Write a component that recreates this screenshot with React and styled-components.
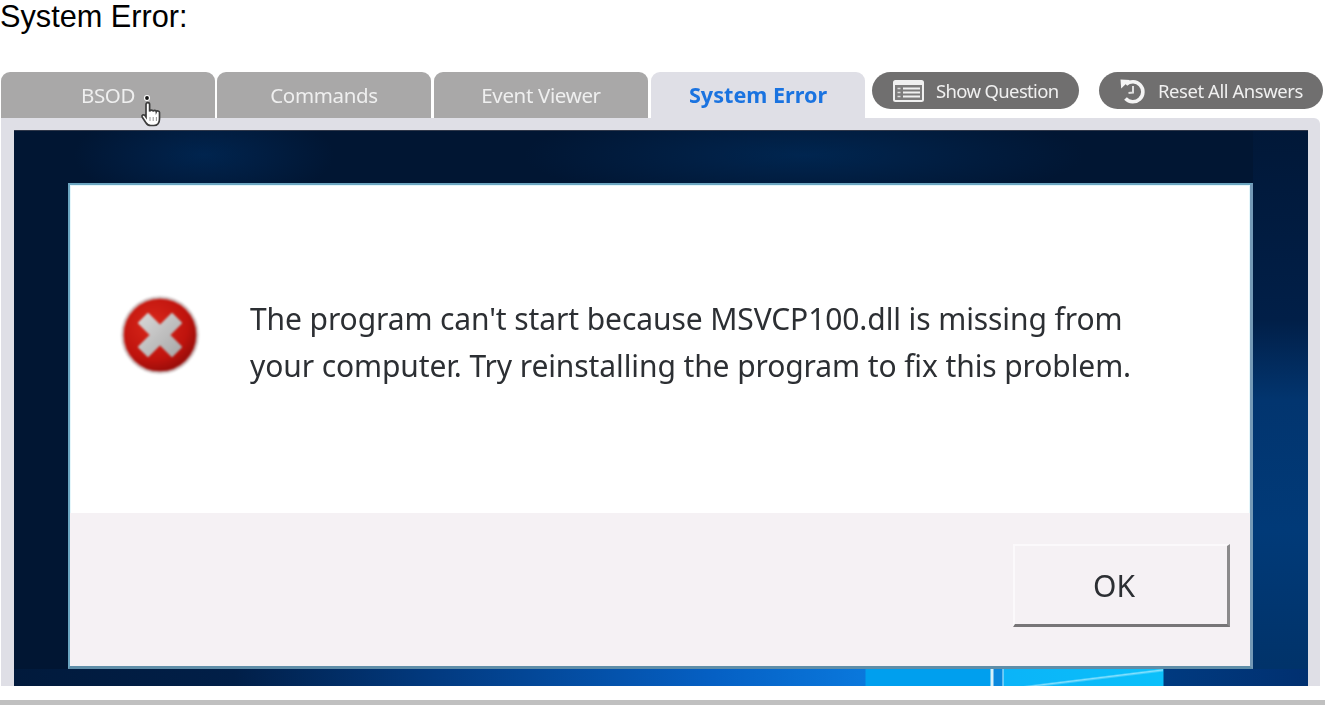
import styled, { createGlobalStyle } from "styled-components";

const GlobalStyle = createGlobalStyle`
  html, body {
    margin: 0;
    padding: 0;
    background: #fff;
  }
  body {
    font-family: "Liberation Sans", Arial, sans-serif;
  }
`;

const Page = styled.div`
  width: 1325px;
  height: 705px;
  overflow: hidden;
  display: flex;
  flex-direction: column;
`;

const Heading = styled.div`
  height: 72px;
  box-sizing: border-box;
  font-size: 30.7px;
  line-height: 34px;
  color: #000;
`;

const TabBar = styled.div`
  display: flex;
  height: 46px;
  padding-left: 1px;
  align-items: flex-start;
  filter: blur(0.5px);
`;

const Tab = styled.div`
  width: 214px;
  height: 46px;
  margin-right: ${(p) => p.$gap}px;
  box-sizing: border-box;
  border-radius: 9px 9px 0 0;
  background: ${(p) => (p.$active ? "#dfdfe6" : "#a9a8a8")};
  color: ${(p) => (p.$active ? "#1a73e0" : "#efefef")};
  font-family: "Noto Sans", sans-serif;
  font-weight: ${(p) => (p.$active ? 700 : 400)};
  font-size: ${(p) => (p.$active ? 21.6 : 20.5)}px;
  letter-spacing: ${(p) => (p.$active ? 0 : -0.35)}px;
  line-height: 46px;
  text-align: center;
`;

const Pill = styled.div`
  height: 37px;
  width: ${(p) => p.$width}px;
  margin-left: ${(p) => p.$left}px;
  box-sizing: border-box;
  display: flex;
  align-items: center;
  gap: ${(p) => p.$iconGap}px;
  padding-left: ${(p) => p.$pad}px;
  border-radius: 19px;
  background: #706f6f;
  color: #f0f0f0;
  font-family: "Noto Sans", sans-serif;
  font-size: 18.5px;
  letter-spacing: ${(p) => p.$track}px;
  white-space: nowrap;
`;

const Panel = styled.div`
  width: 1319px;
  height: 568px;
  margin-left: 1px;
  box-sizing: border-box;
  padding: 12px 12px 0 13px;
  background: #dfdfe6;
  border-radius: 0 6px 0 0;
  filter: blur(0.5px);
`;

const Desktop = styled.div`
  height: 556px;
  box-sizing: border-box;
  padding: 53px 55px 17px 54px;
  background:
    linear-gradient(173deg, transparent 0 52%, rgba(190, 240, 255, 0.7) 56%, transparent 62%) 989px 100% / 160px 17px no-repeat,
    linear-gradient(
        90deg,
        #011a3c 0,
        #011f48 220px,
        #023a80 420px,
        #0560c4 700px,
        #0a78dc 851px,
        #009fee 852px,
        #009fee 976px,
        #d8f0fa 977px,
        #d8f0fa 979px,
        #0a88dd 980px,
        #0a88dd 988px,
        #c0ecff 989px,
        #0bb4f8 990px,
        #0bc0fa 1149px,
        #003a80 1150px,
        #013070 1294px
      )
      0 100% / 100% 17px no-repeat,
    linear-gradient(180deg, #011838 0, #011f48 190px, #02356f 270px, #013a78 400px, #013268 100%) 100% 0 / 55px 100% no-repeat,
    radial-gradient(ellipse 130px 50px at 190px 25px, rgba(0, 42, 90, 0.7), transparent),
    radial-gradient(ellipse 280px 50px at 790px 25px, rgba(0, 44, 92, 0.7), transparent),
    #011633;
  box-shadow: inset 0 1px 0 #30384a;
`;

const Dialog = styled.div`
  height: 486px;
  box-sizing: border-box;
  display: flex;
  flex-direction: column;
  border: 2px solid #6ba5c0;
  border-right: 3px solid #7499b6;
  border-bottom: 3px solid #5f8ea8;
  box-shadow: inset 0 0 0 1px #e4f6fb;
  background: #fff;
`;

const MessageArea = styled.div`
  height: 328px;
  display: flex;
  align-items: flex-start;
  padding: 110px 0 0 50px;
  box-sizing: border-box;
`;

const ErrorBadge = styled.svg`
  width: 80px;
  height: 80px;
  flex: none;
  filter: blur(1px);
`;

const Message = styled.div`
  margin-left: 50px;
  font-family: "Noto Sans", sans-serif;
  font-size: 30px;
  letter-spacing: -0.1px;
  line-height: 47px;
  color: #2c2f33;
  white-space: nowrap;
`;

const Footer = styled.div`
  flex: 1;
  display: flex;
  justify-content: flex-end;
  padding: 31px 20px 0 0;
  background: #f5f1f4;
`;

const OkButton = styled.div`
  width: 217px;
  height: 83px;
  box-sizing: border-box;
  display: flex;
  align-items: center;
  justify-content: center;
  padding-right: 14px;
  background: #f5f1f4;
  border-top: 2px solid #fbf9fb;
  border-left: 2px solid #fbf9fb;
  border-right: 3px solid #8b8a8b;
  border-bottom: 3px solid #777577;
  font-family: "Noto Sans", sans-serif;
  font-size: 30px;
  color: #2c2f33;
`;

const BottomRule = styled.div`
  height: 5px;
  margin-top: 14px;
  background: #c0c0c0;
`;

const CursorWrap = styled.svg`
  position: absolute;
  left: 140px;
  top: 94px;
  width: 24px;
  height: 33px;
  filter: blur(0.4px);
`;

function ListIcon() {
  return (
    <svg width="31" height="22" viewBox="0 0 31 22" fill="none">
      <rect x="1" y="1" width="29" height="20" rx="1.5" fill="#7d7c7c" stroke="#f0f0f0" strokeWidth="2" />
      <path d="M1 3.5h29" stroke="#f0f0f0" strokeWidth="3" />
      <path d="M4.5 8.5h3M4.5 12.5h3M4.5 16.5h3" stroke="#dcdcdc" strokeWidth="1.6" />
      <path d="M10 8.5h17M10 12.5h17M10 16.5h17" stroke="#f0f0f0" strokeWidth="1.8" />
    </svg>
  );
}

function ResetIcon() {
  return (
    <svg width="26" height="26" viewBox="0 0 26 26" fill="none">
      <path d="M7 6.5A10 10 0 1 1 6.5 20.5" stroke="#f4f4f4" strokeWidth="3.6" />
      <path d="M1.5 1.5l9.5.4-8.8 8.6z" fill="#f4f4f4" />
      <path d="M14 8v6.5l-4.5 .5" stroke="#dedede" strokeWidth="2" />
    </svg>
  );
}

function ErrorIcon() {
  return (
    <ErrorBadge viewBox="0 0 80 80">
      <defs>
        <radialGradient id="redFill" cx="0.4" cy="0.36" r="0.72">
          <stop offset="0" stopColor="#d9281b" />
          <stop offset="0.65" stopColor="#bf130d" />
          <stop offset="1" stopColor="#880a08" />
        </radialGradient>
        <linearGradient id="crossFill" x1="0" y1="0" x2="1" y2="1">
          <stop offset="0" stopColor="#d8d8d8" />
          <stop offset="1" stopColor="#a8a8a8" />
        </linearGradient>
      </defs>
      <circle cx="40" cy="40" r="37.5" fill="url(#redFill)" stroke="#cdbcbc" strokeWidth="2.5" />
      <path
        d="M28 19L40 31 52 19 61 28 49 40 61 52 52 61 40 49 28 61 19 52 31 40 19 28z"
        fill="url(#crossFill)"
        stroke="url(#crossFill)"
        strokeWidth="2"
        strokeLinejoin="round"
      />
    </ErrorBadge>
  );
}

function HandCursor() {
  return (
    <CursorWrap viewBox="0 0 24 33">
      <circle cx="7" cy="4" r="3" fill="#fff" />
      <circle cx="7" cy="4" r="1.9" fill="#111" />
      <path
        d="M6 10.5c0-2.6 3.6-2.6 3.6 0v7c.4-1.8 3.3-1.8 3.5 0 .3-1.6 3-1.6 3.2.2.5-1.2 3.2-1 3.2.8v6.5c0 3.6-2 6.5-5.6 6.5h-3.2c-2.2 0-3.6-1-4.8-2.8l-3.6-5.4c-1.2-2 1.2-3.4 2.7-1.8L6 23z"
        fill="#fff"
        stroke="#3c3c3c"
        strokeWidth="1.7"
      />
      <path d="M10 23v4M13.2 23v4M16.4 23v4" stroke="#8a8a8a" strokeWidth="0.9" />
    </CursorWrap>
  );
}

export default function App() {
  return (
    <>
      <GlobalStyle />
      <Page>
        <Heading>System Error:</Heading>
        <TabBar>
          <Tab $gap={2}>BSOD</Tab>
          <Tab $gap={3}>Commands</Tab>
          <Tab $gap={3}>Event Viewer</Tab>
          <Tab $active $gap={0}>System Error</Tab>
          <Pill $width={207} $left={7} $pad={21} $iconGap={12} $track={-0.65}>
            <ListIcon />
            Show Question
          </Pill>
          <Pill $width={224} $left={20} $pad={20} $iconGap={13} $track={-0.45}>
            <ResetIcon />
            Reset All Answers
          </Pill>
        </TabBar>
        <Panel>
          <Desktop>
            <Dialog>
              <MessageArea>
                <ErrorIcon />
                <Message>
                  The program can't start because MSVCP100.dll is missing from
                  <br />
                  your computer. Try reinstalling the program to fix this problem.
                </Message>
              </MessageArea>
              <Footer>
                <OkButton>OK</OkButton>
              </Footer>
            </Dialog>
          </Desktop>
        </Panel>
        <BottomRule />
        <HandCursor />
      </Page>
    </>
  );
}
